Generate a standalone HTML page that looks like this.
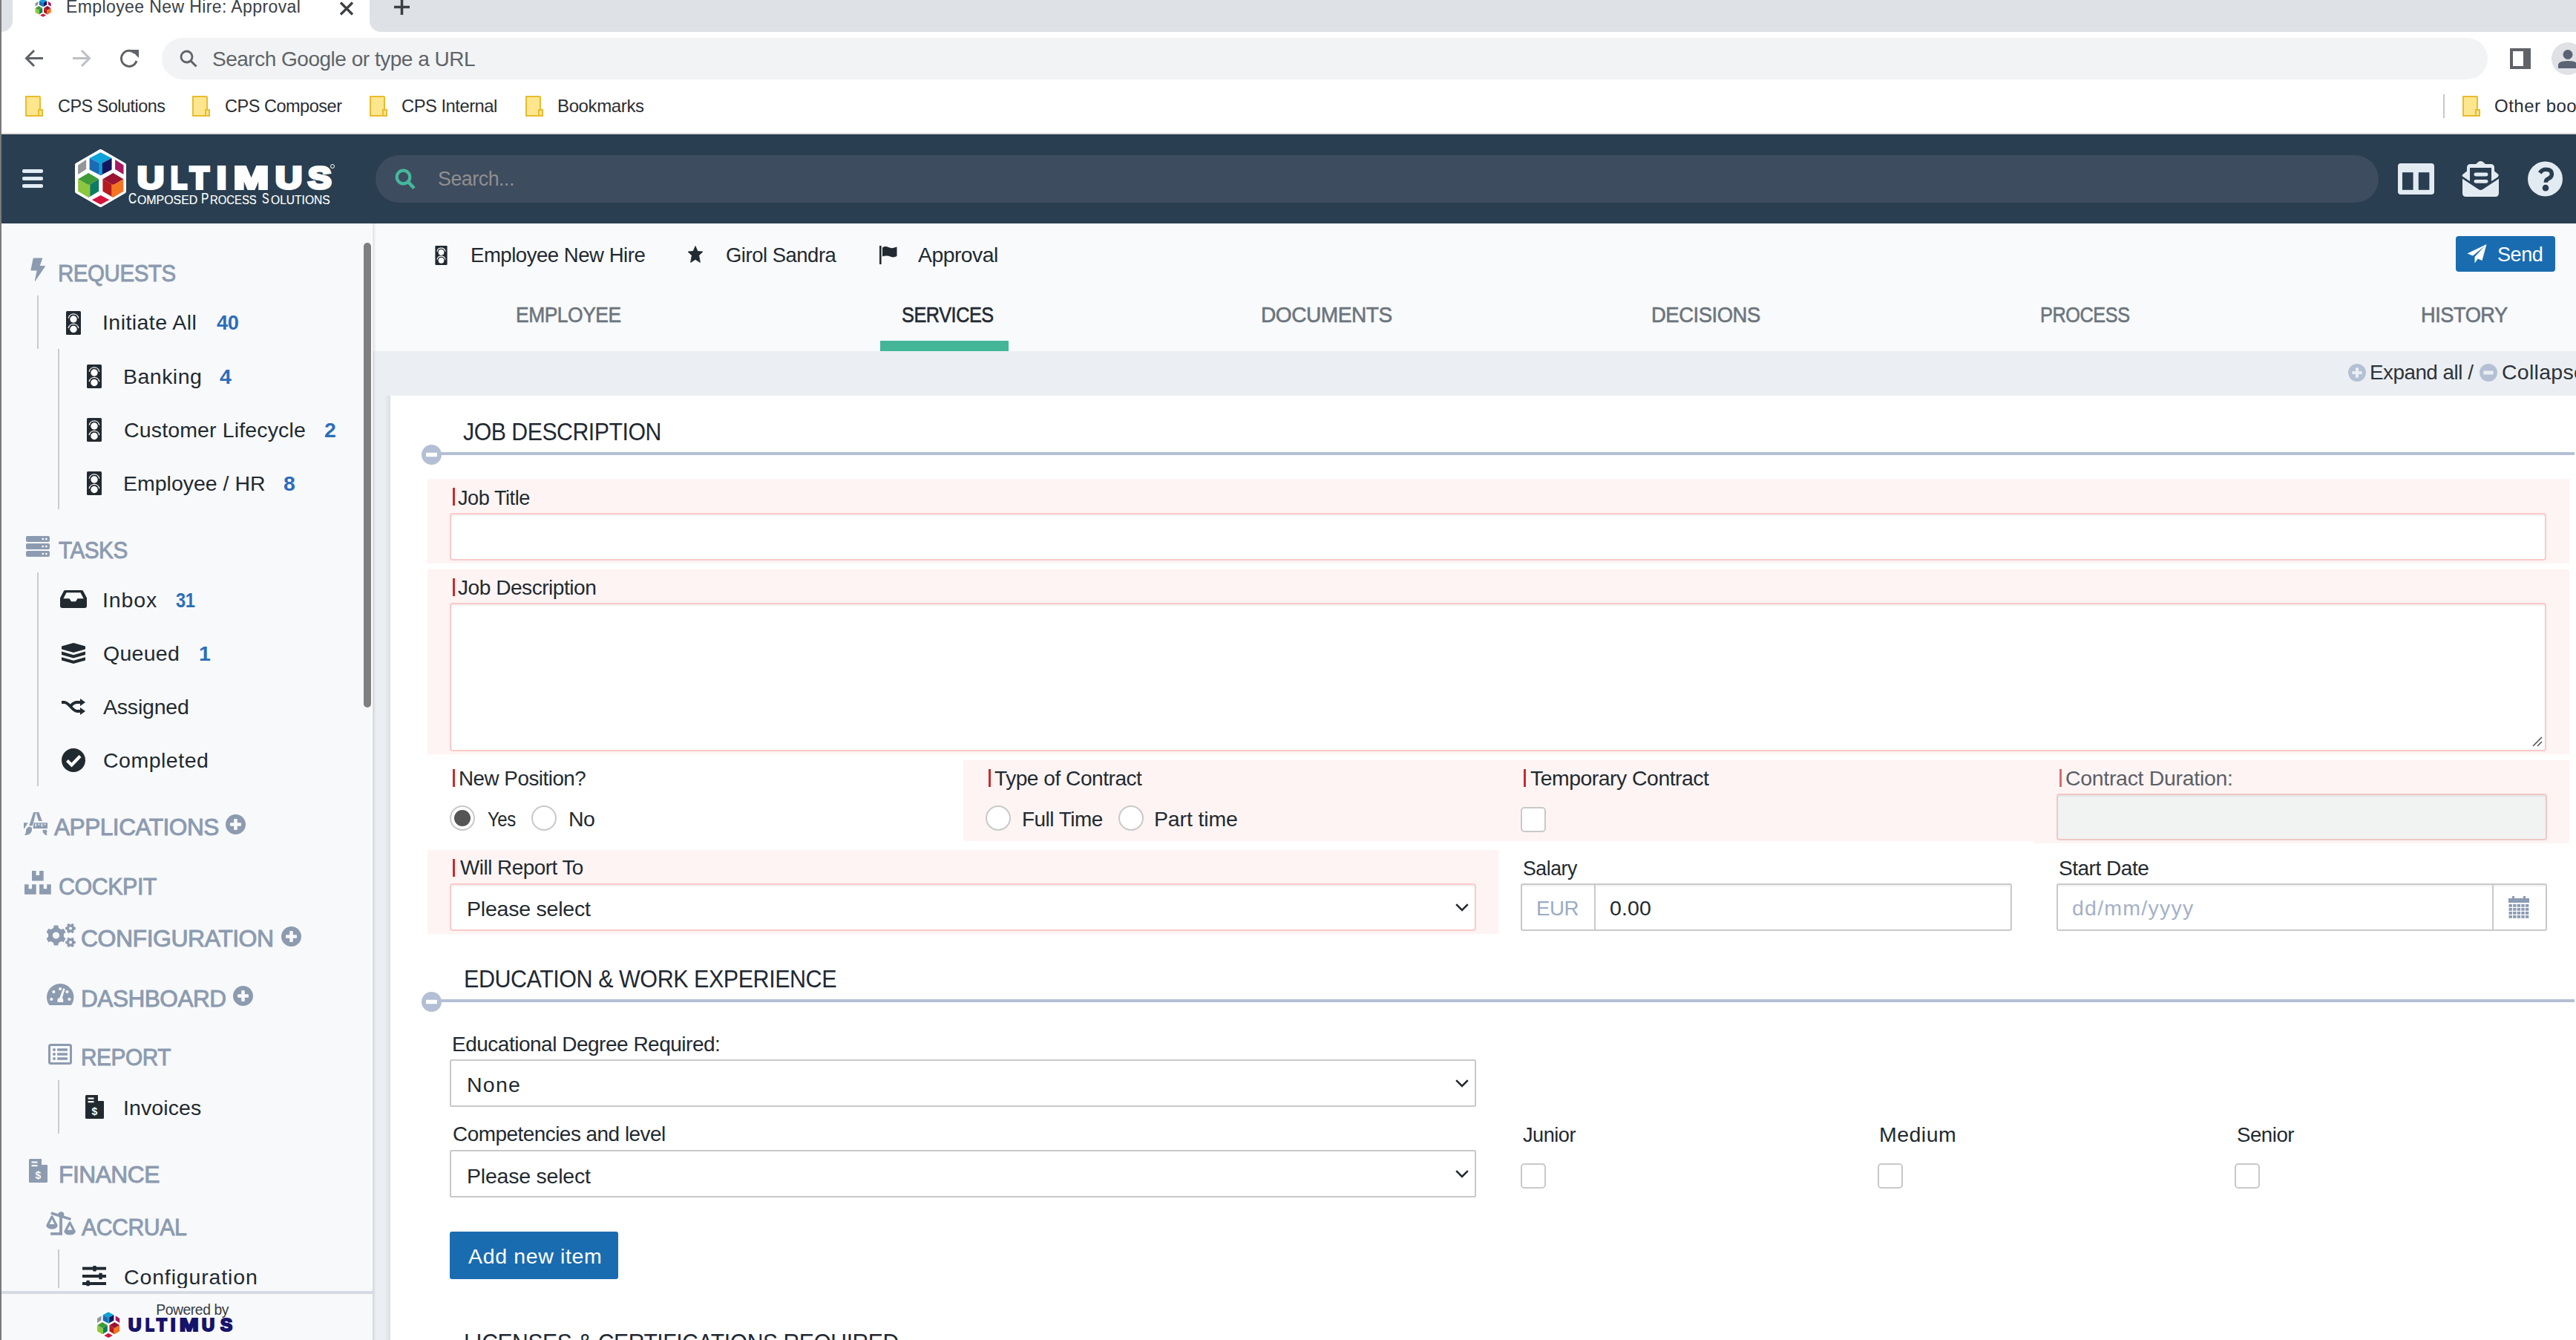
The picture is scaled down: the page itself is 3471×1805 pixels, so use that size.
<!DOCTYPE html>
<html><head><meta charset="utf-8"><title>Employee New Hire: Approval</title>
<style>
html,body{margin:0;padding:0;width:3471px;height:1805px;overflow:hidden;background:#fff;}
body{position:relative;font-family:"Liberation Sans", sans-serif;}
svg{display:block;overflow:visible}
</style></head><body>
<div style="position:absolute;left:0px;top:0px;width:3471px;height:180px;background:#ffffff;"></div>
<div style="position:absolute;left:0px;top:0px;width:3471px;height:43px;background:#dee1e6;"></div>
<div style="position:absolute;left:17px;top:0px;width:481px;height:43px;background:#ffffff;"></div>
<div style="position:absolute;left:2px;top:28px;width:520px;height:15px;background:#ffffff;"></div>
<div style="position:absolute;left:2px;top:0px;width:15px;height:43px;background:#dee1e6;border-bottom-right-radius:15px"></div>
<div style="position:absolute;left:498px;top:0px;width:2973px;height:43px;background:#dee1e6;border-bottom-left-radius:15px"></div>
<svg style="position:absolute;left:46px;top:-3px;width:24px;height:27px" viewBox="0 0 69 78"><polygon points="34.5,2.5 66.5,21 66.5,57 34.5,75.5 2.5,57 2.5,21" fill="#fff" stroke="#fff" stroke-width="5" stroke-linejoin="round"/><polygon points="34.60,4.20 49.60,11.95 34.60,19.70 19.60,11.95" fill="#0ea2d9"/><polygon points="19.60,11.95 34.60,19.70 34.60,35.20 19.60,27.45" fill="#1b6ab5"/><polygon points="49.60,11.95 49.60,27.45 34.60,35.20 34.60,19.70" fill="#15155e"/><polygon points="32.40,18.70 36.80,18.70 36.80,34.20 32.40,34.20" fill="#0ea2d9"/><polygon points="18.20,32.00 32.20,40.25 18.20,48.50 4.20,40.25" fill="#3f9a38"/><polygon points="4.20,40.25 18.20,48.50 18.20,65.00 4.20,56.75" fill="#8dc63f"/><polygon points="32.20,40.25 32.20,56.75 18.20,65.00 18.20,48.50" fill="#0b7d62"/><polygon points="16.00,47.50 20.40,47.50 20.40,64.00 16.00,64.00" fill="#8dc63f"/><polygon points="51.40,32.00 65.40,40.25 51.40,48.50 37.40,40.25" fill="#9c1530"/><polygon points="37.40,40.25 51.40,48.50 51.40,65.00 37.40,56.75" fill="#b51c1f"/><polygon points="65.40,40.25 65.40,56.75 51.40,65.00 51.40,48.50" fill="#f47521"/><polygon points="49.20,47.50 53.60,47.50 53.60,64.00 49.20,64.00" fill="#f47521"/><polygon points="4.1,21.5 15.2,14 15.2,27 4.1,34" fill="#939598"/><polygon points="54.1,14 65.5,21.5 65.5,34 54.1,27" fill="#a8175f"/><polygon points="34.6,62 46.4,68.2 34.6,74.4 22.9,68.2" fill="#d3143c"/></svg>
<div style="position:absolute;left:89.00px;top:-2.20px;font-size:23px;line-height:23px;color:#3c4043;font-weight:400;letter-spacing:0.397px;white-space:nowrap;">Employee New Hire: Approval</div>
<svg style="position:absolute;left:457px;top:3px;width:20px;height:17px" viewBox="0 0 20 17"><path d="M2 0.5 L18 16.5 M18 0.5 L2 16.5" stroke="#3c4043" stroke-width="3.2"/></svg>
<svg style="position:absolute;left:530px;top:-1px;width:23px;height:22px" viewBox="0 0 23 22"><path d="M11.5 0 V21 M1 10.5 H22" stroke="#3c4043" stroke-width="3.6"/></svg>
<div style="position:absolute;left:218px;top:51px;width:3134px;height:56px;background:#f1f3f4;border-radius:28px"></div>
<svg style="position:absolute;left:33px;top:66px;width:26px;height:25px" viewBox="0 0 26 25"><path d="M25 12.5 H3 M13 2 L2.5 12.5 L13 23" stroke="#5f6368" stroke-width="3" fill="none"/></svg>
<svg style="position:absolute;left:97px;top:66px;width:26px;height:25px" viewBox="0 0 26 25"><path d="M1 12.5 H23 M13 2 L23.5 12.5 L13 23" stroke="#bcc0c4" stroke-width="3" fill="none"/></svg>
<svg style="position:absolute;left:161px;top:66px;width:27px;height:26px" viewBox="0 0 27 26"><path d="M23 16 A10.5 10.5 0 1 1 20.5 5.5" stroke="#5f6368" stroke-width="3" fill="none"/><path d="M15 1 H26 V12Z" fill="#5f6368"/></svg>
<svg style="position:absolute;left:242px;top:67px;width:24px;height:24px" viewBox="0 0 24 24"><circle cx="9.5" cy="9.5" r="7.5" stroke="#5f6368" stroke-width="2.8" fill="none"/><path d="M15 15 L22.5 22.5" stroke="#5f6368" stroke-width="3"/></svg>
<div style="position:absolute;left:286.00px;top:65.62px;font-size:28px;line-height:28px;color:#5f6368;font-weight:400;letter-spacing:-0.490px;white-space:nowrap;">Search Google or type a URL</div>
<svg style="position:absolute;left:3382px;top:65px;width:28px;height:28px" viewBox="0 0 28 28"><rect x="0" y="0" width="28" height="28" fill="#5f6368"/><rect x="4" y="4" width="14" height="20" fill="#fff"/></svg>
<div style="position:absolute;left:3438px;top:57px;width:44px;height:44px;background:#dfe1e5;border-radius:22px"></div>
<svg style="position:absolute;left:3447px;top:67px;width:35px;height:25px" viewBox="0 0 35 25"><circle cx="13" cy="6.5" r="6.5" fill="#5a6274"/><path d="M0 25 V21 Q0 15 13 15 Q26 15 26 21 V25Z" fill="#5a6274"/></svg>
<svg style="position:absolute;left:34px;top:129px;width:24px;height:28px" viewBox="0 0 24 28"><path d="M1 1 H19 Q20 1 20 2 V19 H23 V27 H1Z" fill="#fde68e" stroke="#e8bc2f" stroke-width="2"/><path d="M18 19 H23 V27 H18Z" fill="#fde68e" stroke="#e8bc2f" stroke-width="2"/></svg>
<svg style="position:absolute;left:259px;top:129px;width:24px;height:28px" viewBox="0 0 24 28"><path d="M1 1 H19 Q20 1 20 2 V19 H23 V27 H1Z" fill="#fde68e" stroke="#e8bc2f" stroke-width="2"/><path d="M18 19 H23 V27 H18Z" fill="#fde68e" stroke="#e8bc2f" stroke-width="2"/></svg>
<svg style="position:absolute;left:498px;top:129px;width:24px;height:28px" viewBox="0 0 24 28"><path d="M1 1 H19 Q20 1 20 2 V19 H23 V27 H1Z" fill="#fde68e" stroke="#e8bc2f" stroke-width="2"/><path d="M18 19 H23 V27 H18Z" fill="#fde68e" stroke="#e8bc2f" stroke-width="2"/></svg>
<svg style="position:absolute;left:708px;top:129px;width:24px;height:28px" viewBox="0 0 24 28"><path d="M1 1 H19 Q20 1 20 2 V19 H23 V27 H1Z" fill="#fde68e" stroke="#e8bc2f" stroke-width="2"/><path d="M18 19 H23 V27 H18Z" fill="#fde68e" stroke="#e8bc2f" stroke-width="2"/></svg>
<svg style="position:absolute;left:3318px;top:129px;width:24px;height:28px" viewBox="0 0 24 28"><path d="M1 1 H19 Q20 1 20 2 V19 H23 V27 H1Z" fill="#fde68e" stroke="#e8bc2f" stroke-width="2"/><path d="M18 19 H23 V27 H18Z" fill="#fde68e" stroke="#e8bc2f" stroke-width="2"/></svg>
<div style="position:absolute;left:78.03px;top:130.96px;font-size:24px;line-height:24px;color:#2b2e33;font-weight:400;letter-spacing:-0.500px;white-space:nowrap;transform:scaleX(0.9746);transform-origin:0 0;">CPS Solutions</div>
<div style="position:absolute;left:303.02px;top:130.96px;font-size:24px;line-height:24px;color:#2b2e33;font-weight:400;letter-spacing:-0.500px;white-space:nowrap;transform:scaleX(0.9798);transform-origin:0 0;">CPS Composer</div>
<div style="position:absolute;left:541.01px;top:130.96px;font-size:24px;line-height:24px;color:#2b2e33;font-weight:400;letter-spacing:-0.500px;white-space:nowrap;transform:scaleX(0.9904);transform-origin:0 0;">CPS Internal</div>
<div style="position:absolute;left:751.00px;top:130.96px;font-size:24px;line-height:24px;color:#2b2e33;font-weight:400;letter-spacing:-0.379px;white-space:nowrap;">Bookmarks</div>
<div style="position:absolute;left:3292px;top:127px;width:2px;height:32px;background:#c7c7c7;"></div>
<div style="position:absolute;left:3361.00px;top:130.96px;font-size:24px;line-height:24px;color:#2b2e33;font-weight:400;letter-spacing:0.495px;white-space:nowrap;">Other bookmarks</div>
<div style="position:absolute;left:0px;top:179px;width:3471px;height:2px;background:#dcdcdc;"></div>
<div style="position:absolute;left:0px;top:181px;width:3471px;height:120px;background:#293e50;"></div>
<div style="position:absolute;left:0px;top:181px;width:3471px;height:1px;background:#22364a;"></div>
<div style="position:absolute;left:30px;top:228px;width:28px;height:5px;background:#e3ecf3;border-radius:2px"></div>
<div style="position:absolute;left:30px;top:238px;width:28px;height:5px;background:#e3ecf3;border-radius:2px"></div>
<div style="position:absolute;left:30px;top:248px;width:28px;height:5px;background:#e3ecf3;border-radius:2px"></div>
<svg style="position:absolute;left:101px;top:201px;width:69px;height:78px" viewBox="0 0 69 78"><polygon points="34.5,2.5 66.5,21 66.5,57 34.5,75.5 2.5,57 2.5,21" fill="#fff" stroke="#fff" stroke-width="5" stroke-linejoin="round"/><polygon points="34.60,4.20 49.60,11.95 34.60,19.70 19.60,11.95" fill="#0ea2d9"/><polygon points="19.60,11.95 34.60,19.70 34.60,35.20 19.60,27.45" fill="#1b6ab5"/><polygon points="49.60,11.95 49.60,27.45 34.60,35.20 34.60,19.70" fill="#15155e"/><polygon points="32.40,18.70 36.80,18.70 36.80,34.20 32.40,34.20" fill="#0ea2d9"/><polygon points="18.20,32.00 32.20,40.25 18.20,48.50 4.20,40.25" fill="#3f9a38"/><polygon points="4.20,40.25 18.20,48.50 18.20,65.00 4.20,56.75" fill="#8dc63f"/><polygon points="32.20,40.25 32.20,56.75 18.20,65.00 18.20,48.50" fill="#0b7d62"/><polygon points="16.00,47.50 20.40,47.50 20.40,64.00 16.00,64.00" fill="#8dc63f"/><polygon points="51.40,32.00 65.40,40.25 51.40,48.50 37.40,40.25" fill="#9c1530"/><polygon points="37.40,40.25 51.40,48.50 51.40,65.00 37.40,56.75" fill="#b51c1f"/><polygon points="65.40,40.25 65.40,56.75 51.40,65.00 51.40,48.50" fill="#f47521"/><polygon points="49.20,47.50 53.60,47.50 53.60,64.00 49.20,64.00" fill="#f47521"/><polygon points="4.1,21.5 15.2,14 15.2,27 4.1,34" fill="#939598"/><polygon points="54.1,14 65.5,21.5 65.5,34 54.1,27" fill="#a8175f"/><polygon points="34.6,62 46.4,68.2 34.6,74.4 22.9,68.2" fill="#d3143c"/></svg>
<div style="position:absolute;left:184.82px;top:218.53px;font-size:42px;line-height:42px;color:#ffffff;font-weight:700;letter-spacing:0.000px;white-space:nowrap;-webkit-text-stroke:4px #ffffff;transform:scaleX(1.1885);transform-origin:0 0;">U</div>
<div style="position:absolute;left:230.49px;top:218.53px;font-size:42px;line-height:42px;color:#ffffff;font-weight:700;letter-spacing:0.000px;white-space:nowrap;-webkit-text-stroke:4px #ffffff;transform:scaleX(0.8565);transform-origin:0 0;">L</div>
<div style="position:absolute;left:256.40px;top:218.53px;font-size:42px;line-height:42px;color:#ffffff;font-weight:700;letter-spacing:0.000px;white-space:nowrap;-webkit-text-stroke:4px #ffffff;transform:scaleX(0.9962);transform-origin:0 0;">T</div>
<div style="position:absolute;left:292.47px;top:218.53px;font-size:42px;line-height:42px;color:#ffffff;font-weight:700;letter-spacing:0.000px;white-space:nowrap;-webkit-text-stroke:4px #ffffff;transform:scaleX(1.1143);transform-origin:0 0;">I</div>
<div style="position:absolute;left:314.52px;top:218.53px;font-size:42px;line-height:42px;color:#ffffff;font-weight:700;letter-spacing:0.000px;white-space:nowrap;-webkit-text-stroke:4px #ffffff;transform:scaleX(1.3419);transform-origin:0 0;">M</div>
<div style="position:absolute;left:370.52px;top:218.53px;font-size:42px;line-height:42px;color:#ffffff;font-weight:700;letter-spacing:0.000px;white-space:nowrap;-webkit-text-stroke:4px #ffffff;transform:scaleX(1.1885);transform-origin:0 0;">U</div>
<div style="position:absolute;left:415.18px;top:218.53px;font-size:42px;line-height:42px;color:#ffffff;font-weight:700;letter-spacing:0.000px;white-space:nowrap;-webkit-text-stroke:4px #ffffff;transform:scaleX(1.1231);transform-origin:0 0;">S</div>
<div style="position:absolute;left:445px;top:221px;width:6px;height:6px;border-radius:3px;border:1px solid #fff;box-sizing:border-box;"></div>
<div style="position:absolute;left:173.42px;top:258.33px;font-size:19.6px;line-height:19.6px;color:#ffffff;font-weight:400;letter-spacing:0.000px;white-space:nowrap;-webkit-text-stroke:0.15px #ffffff;transform:scaleX(0.7769);transform-origin:0 0;">C</div>
<div style="position:absolute;left:184.60px;top:261.09px;font-size:16.3px;line-height:16.3px;color:#ffffff;font-weight:400;letter-spacing:0.000px;white-space:nowrap;-webkit-text-stroke:0.15px #ffffff;transform:scaleX(0.9761);transform-origin:0 0;">OMPOSED</div>
<div style="position:absolute;left:271.41px;top:258.33px;font-size:19.6px;line-height:19.6px;color:#ffffff;font-weight:400;letter-spacing:0.000px;white-space:nowrap;-webkit-text-stroke:0.15px #ffffff;transform:scaleX(0.7917);transform-origin:0 0;">P</div>
<div style="position:absolute;left:283.39px;top:261.09px;font-size:16.3px;line-height:16.3px;color:#ffffff;font-weight:400;letter-spacing:0.000px;white-space:nowrap;-webkit-text-stroke:0.15px #ffffff;transform:scaleX(0.9117);transform-origin:0 0;">ROCESS</div>
<div style="position:absolute;left:352.70px;top:258.33px;font-size:19.6px;line-height:19.6px;color:#ffffff;font-weight:400;letter-spacing:0.000px;white-space:nowrap;-webkit-text-stroke:0.15px #ffffff;transform:scaleX(0.7308);transform-origin:0 0;">S</div>
<div style="position:absolute;left:365.30px;top:261.09px;font-size:16.3px;line-height:16.3px;color:#ffffff;font-weight:400;letter-spacing:0.000px;white-space:nowrap;-webkit-text-stroke:0.15px #ffffff;transform:scaleX(0.9584);transform-origin:0 0;">OLUTIONS</div>
<div style="position:absolute;left:506px;top:209px;width:2699px;height:64px;background:#3e4c5f;border-radius:32px"></div>
<svg style="position:absolute;left:532px;top:227px;width:28px;height:29px" viewBox="0 0 28 29"><circle cx="11.5" cy="11.5" r="8.8" stroke="#45b89c" stroke-width="4.2" fill="none"/><path d="M18 18 L26 26.5" stroke="#45b89c" stroke-width="4.6"/></svg>
<div style="position:absolute;left:590.01px;top:228.46px;font-size:27px;line-height:27px;color:#8f8f8f;font-weight:400;letter-spacing:-0.500px;white-space:nowrap;transform:scaleX(0.9946);transform-origin:0 0;">Search...</div>
<svg style="position:absolute;left:3231px;top:220px;width:49px;height:42px" viewBox="0 0 49 42"><rect x="0" y="0" width="49" height="42" rx="4" fill="#e3ebf2"/><rect x="6" y="12.2" width="14.6" height="23.6" fill="#293e50"/><rect x="27.8" y="12.2" width="14.6" height="23.6" fill="#293e50"/></svg>
<svg style="position:absolute;left:3318px;top:217px;width:49px;height:48px" viewBox="0 0 49 48"><path d="M24.5 0 Q26 0 27.5 1 L31 4 H38 Q43 4 43 9 V13.5 L48 17.5 Q49.5 19 48 20.5 V43 Q49 48 44 48 H5 Q0 48 0 43 V20.5 Q-1 19 1 17.5 L6 13.5 V9 Q6 4 11 4 H18 L21.5 1 Q23 0 24.5 0Z" fill="#e3ebf2"/><rect x="10" y="9" width="29" height="30" fill="#293e50"/><path d="M0 20.5 L22 35.3 Q24.5 37 27 35.3 L49 20.5 V43 Q49 48 44 48 H5 Q0 48 0 43Z" fill="#293e50"/><path d="M0 23.8 L22 38.2 Q24.5 39.8 27 38.2 L49 23.8 V43 Q49 48 44 48 H5 Q0 48 0 43Z" fill="#e3ebf2"/><rect x="15.5" y="15.6" width="19" height="4.8" rx="2.4" fill="#e3ebf2"/><rect x="15.5" y="24.9" width="19" height="4.8" rx="2.4" fill="#e3ebf2"/></svg>
<svg style="position:absolute;left:3406px;top:217px;width:47px;height:48px" viewBox="0 0 47 48"><circle cx="23.5" cy="24" r="23.5" fill="#e3ebf2"/><path d="M16.2 15.8 Q19.5 11.3 24.2 11.3 Q32.4 11.3 32.4 17.2 Q32.4 21.5 27.5 23.8 Q24.3 25.3 24.3 28.8" stroke="#293e50" stroke-width="5.6" fill="none"/><circle cx="24" cy="36.1" r="4.3" fill="#293e50"/></svg>
<div style="position:absolute;left:0px;top:301px;width:502px;height:1504px;background:#f8f9fb;"></div>
<div style="position:absolute;left:500px;top:301px;width:2px;height:1504px;background:#ffffff;"></div>
<div style="position:absolute;left:490px;top:327px;width:10px;height:626px;background:#7f7f7f;border-radius:5px"></div>
<div style="position:absolute;left:50px;top:398px;width:2px;height:72px;background:#cccccc;"></div>
<div style="position:absolute;left:78px;top:470px;width:2px;height:216px;background:#cccccc;"></div>
<div style="position:absolute;left:50px;top:771px;width:2px;height:288px;background:#cccccc;"></div>
<div style="position:absolute;left:78px;top:1455px;width:2px;height:72px;background:#cccccc;"></div>
<div style="position:absolute;left:78px;top:1683px;width:2px;height:52px;background:#cccccc;"></div>
<svg style="position:absolute;left:41px;top:347px;width:20px;height:32px" viewBox="0 0 20 32"><path d="M4.5 0.5 H15.5 Q16.5 0.5 16 1.8 L12.8 11 H19 Q20.3 11 19.6 12.2 L6.6 31.5 Q5.8 32.3 5.9 31 L8.6 17.5 H1.3 Q0.2 17.5 0.5 16.3 L3.6 1.5 Q3.9 0.5 4.5 0.5Z" fill="#8c9bb0"/></svg>
<div style="position:absolute;left:78.16px;top:352.28px;font-size:32px;line-height:32px;color:#8c9bb0;font-weight:400;letter-spacing:-0.500px;white-space:nowrap;-webkit-text-stroke:0.95px #8c9bb0;transform:scaleX(0.9221);transform-origin:0 0;">REQUESTS</div>
<svg style="position:absolute;left:89px;top:419px;width:20px;height:32px" viewBox="0 0 20 32"><rect x="0" y="0" width="20" height="32" rx="1.6" fill="#222a31"/><circle cx="10" cy="11" r="4.7" fill="#fff"/><circle cx="10" cy="24.5" r="4.7" fill="#fff"/><path d="M3.2 9.6 A6.9 6.9 0 0 1 16.8 9.6" stroke="#fff" stroke-width="1.3" fill="none"/><path d="M3.2 23.1 A6.9 6.9 0 0 1 16.8 23.1" stroke="#fff" stroke-width="1.3" fill="none"/></svg>
<div style="position:absolute;left:138.00px;top:420.20px;font-size:28.5px;line-height:28.5px;color:#222a31;font-weight:400;letter-spacing:0.434px;white-space:nowrap;">Initiate All</div>
<div style="position:absolute;left:292.00px;top:420.20px;font-size:28.5px;line-height:28.5px;color:#2c6db9;font-weight:700;letter-spacing:-0.500px;white-space:nowrap;transform:scaleX(0.9555);transform-origin:0 0;">40</div>
<svg style="position:absolute;left:117px;top:491px;width:20px;height:32px" viewBox="0 0 20 32"><rect x="0" y="0" width="20" height="32" rx="1.6" fill="#222a31"/><circle cx="10" cy="11" r="4.7" fill="#fff"/><circle cx="10" cy="24.5" r="4.7" fill="#fff"/><path d="M3.2 9.6 A6.9 6.9 0 0 1 16.8 9.6" stroke="#fff" stroke-width="1.3" fill="none"/><path d="M3.2 23.1 A6.9 6.9 0 0 1 16.8 23.1" stroke="#fff" stroke-width="1.3" fill="none"/></svg>
<div style="position:absolute;left:166.00px;top:493.20px;font-size:28.5px;line-height:28.5px;color:#222a31;font-weight:400;letter-spacing:0.476px;white-space:nowrap;">Banking</div>
<div style="position:absolute;left:296.00px;top:493.20px;font-size:28.5px;line-height:28.5px;color:#2c6db9;font-weight:700;letter-spacing:0.000px;white-space:nowrap;">4</div>
<svg style="position:absolute;left:117px;top:563px;width:20px;height:32px" viewBox="0 0 20 32"><rect x="0" y="0" width="20" height="32" rx="1.6" fill="#222a31"/><circle cx="10" cy="11" r="4.7" fill="#fff"/><circle cx="10" cy="24.5" r="4.7" fill="#fff"/><path d="M3.2 9.6 A6.9 6.9 0 0 1 16.8 9.6" stroke="#fff" stroke-width="1.3" fill="none"/><path d="M3.2 23.1 A6.9 6.9 0 0 1 16.8 23.1" stroke="#fff" stroke-width="1.3" fill="none"/></svg>
<div style="position:absolute;left:167.00px;top:565.20px;font-size:28.5px;line-height:28.5px;color:#222a31;font-weight:400;letter-spacing:0.148px;white-space:nowrap;">Customer Lifecycle</div>
<div style="position:absolute;left:437.00px;top:565.20px;font-size:28.5px;line-height:28.5px;color:#2c6db9;font-weight:700;letter-spacing:0.000px;white-space:nowrap;">2</div>
<svg style="position:absolute;left:117px;top:635px;width:20px;height:32px" viewBox="0 0 20 32"><rect x="0" y="0" width="20" height="32" rx="1.6" fill="#222a31"/><circle cx="10" cy="11" r="4.7" fill="#fff"/><circle cx="10" cy="24.5" r="4.7" fill="#fff"/><path d="M3.2 9.6 A6.9 6.9 0 0 1 16.8 9.6" stroke="#fff" stroke-width="1.3" fill="none"/><path d="M3.2 23.1 A6.9 6.9 0 0 1 16.8 23.1" stroke="#fff" stroke-width="1.3" fill="none"/></svg>
<div style="position:absolute;left:166.00px;top:637.20px;font-size:28.5px;line-height:28.5px;color:#222a31;font-weight:400;letter-spacing:-0.006px;white-space:nowrap;">Employee / HR</div>
<div style="position:absolute;left:382.00px;top:637.20px;font-size:28.5px;line-height:28.5px;color:#2c6db9;font-weight:700;letter-spacing:0.000px;white-space:nowrap;">8</div>
<svg style="position:absolute;left:35px;top:722px;width:32px;height:28px" viewBox="0 0 32 28"><rect x="0" y="0" width="32" height="8" rx="2" fill="#8c9bb0"/><rect x="21.5" y="2.8" width="2.6" height="2.4" rx="1" fill="#f8f9fb"/><rect x="26" y="2.8" width="2.6" height="2.4" rx="1" fill="#f8f9fb"/><rect x="0" y="10" width="32" height="8" rx="2" fill="#8c9bb0"/><rect x="21.5" y="12.8" width="2.6" height="2.4" rx="1" fill="#f8f9fb"/><rect x="26" y="12.8" width="2.6" height="2.4" rx="1" fill="#f8f9fb"/><rect x="0" y="20" width="32" height="8" rx="2" fill="#8c9bb0"/><rect x="21.5" y="22.8" width="2.6" height="2.4" rx="1" fill="#f8f9fb"/><rect x="26" y="22.8" width="2.6" height="2.4" rx="1" fill="#f8f9fb"/></svg>
<div style="position:absolute;left:79.00px;top:725.28px;font-size:32px;line-height:32px;color:#8c9bb0;font-weight:400;letter-spacing:-0.500px;white-space:nowrap;-webkit-text-stroke:0.95px #8c9bb0;transform:scaleX(0.9274);transform-origin:0 0;">TASKS</div>
<svg style="position:absolute;left:81px;top:795px;width:36px;height:24px" viewBox="0 0 36 24"><path fill-rule="evenodd" fill="#222a31" d="M7 0 H29 Q30.5 0 31.3 1.4 L36 10.5 V21 Q36 24 33 24 H3 Q0 24 0 21 V10.5 L4.7 1.4 Q5.5 0 7 0Z M8.5 3.3 H27.5 L31.6 11.2 H23.5 L21 15.2 H15 L12.5 11.2 H4.4Z"/></svg>
<div style="position:absolute;left:138.00px;top:794.20px;font-size:28.5px;line-height:28.5px;color:#222a31;font-weight:400;letter-spacing:0.883px;white-space:nowrap;">Inbox</div>
<div style="position:absolute;left:237.00px;top:794.20px;font-size:28.5px;line-height:28.5px;color:#2c6db9;font-weight:700;letter-spacing:-0.500px;white-space:nowrap;transform:scaleX(0.8293);transform-origin:0 0;">31</div>
<svg style="position:absolute;left:83px;top:866px;width:32px;height:28px" viewBox="0 0 32 28"><path fill="#222a31" d="M16 0 L32 4.6 V8.4 L16 13 L0 8.4 V4.6Z"/><path fill="#222a31" d="M0 11.5 L16 16.2 L32 11.5 V16 L16 20.6 L0 16Z"/><path fill="#222a31" d="M0 19.2 L16 23.8 L32 19.2 V23.4 L16 28 L0 23.4Z"/></svg>
<div style="position:absolute;left:139.00px;top:866.20px;font-size:28.5px;line-height:28.5px;color:#222a31;font-weight:400;letter-spacing:0.286px;white-space:nowrap;">Queued</div>
<div style="position:absolute;left:268.00px;top:866.20px;font-size:28.5px;line-height:28.5px;color:#2c6db9;font-weight:700;letter-spacing:0.000px;white-space:nowrap;">1</div>
<svg style="position:absolute;left:83px;top:941px;width:32px;height:22px" viewBox="0 0 32 22"><path d="M0 5 H3.5 C10.5 5 14 17 21 17 H26" stroke="#222a31" stroke-width="3.8" fill="none"/><path d="M12.5 9.8 C15 6.5 17.5 5 21 5 H26" stroke="#222a31" stroke-width="3.8" fill="none"/><path d="M25 0 L32 5 L25 10Z" fill="#222a31"/><path d="M25 12 L32 17 L25 22Z" fill="#222a31"/></svg>
<div style="position:absolute;left:139.00px;top:938.20px;font-size:28.5px;line-height:28.5px;color:#222a31;font-weight:400;letter-spacing:-0.199px;white-space:nowrap;">Assigned</div>
<svg style="position:absolute;left:83px;top:1008px;width:32px;height:32px" viewBox="0 0 32 32"><circle cx="16" cy="16" r="16" fill="#222a31"/><path d="M7.5 16.5 L13.5 22.5 L25 10.5" stroke="#fff" stroke-width="4.2" fill="none" stroke-linejoin="miter"/></svg>
<div style="position:absolute;left:139.00px;top:1010.20px;font-size:28.5px;line-height:28.5px;color:#222a31;font-weight:400;letter-spacing:0.503px;white-space:nowrap;">Completed</div>
<svg style="position:absolute;left:32px;top:1094px;width:32px;height:31px" viewBox="0 0 32 31"><path d="M13.2 0 H16.5 L11.9 18.3 H7.2Z" fill="#8c9bb0"/><path d="M16.3 0 H20.4 L24.8 12.1 H20.1Z" fill="#8c9bb0"/><path d="M13.6 14.3 H32 V21.9 H12.5Z" fill="#8c9bb0"/><rect x="15.3" y="15.4" width="1.9" height="4" fill="#f8f9fb" opacity="0.8"/><rect x="19.4" y="15.4" width="1.9" height="2.2" fill="#f8f9fb" opacity="0.8"/><rect x="23.4" y="15.4" width="1.9" height="4" fill="#f8f9fb" opacity="0.8"/><rect x="27.5" y="15.4" width="1.9" height="2.2" fill="#f8f9fb" opacity="0.8"/><path d="M0 14.3 H5.8 L0.8 21.9 H0Z" fill="#8c9bb0"/><path d="M7.5 19.6 Q11.2 19.6 11.1 23.2 Q10.8 28.5 5.2 30.6 Q2 31.4 0.9 30.6 Q3 29.3 2.9 26.3 Q2.8 21 7.5 19.6Z" fill="#8c9bb0"/><path d="M25.4 23.7 H30.6 L31.6 26.2 L30.5 28.3 L31.5 31 H29.3 L26 27.8Z" fill="#8c9bb0"/></svg>
<div style="position:absolute;left:73.00px;top:1098.28px;font-size:32px;line-height:32px;color:#8c9bb0;font-weight:400;letter-spacing:-0.500px;white-space:nowrap;-webkit-text-stroke:0.95px #8c9bb0;transform:scaleX(0.9878);transform-origin:0 0;">APPLICATIONS</div>
<svg style="position:absolute;left:304px;top:1097px;width:27px;height:27px" viewBox="0 0 27 27"><circle cx="13.5" cy="13.5" r="13.5" fill="#8c9bb0"/><rect x="6" y="11.2" width="15" height="4.6" rx="1" fill="#f8f9fb"/><rect x="11.2" y="6" width="4.6" height="15" rx="1" fill="#f8f9fb"/></svg>
<svg style="position:absolute;left:33px;top:1173px;width:36px;height:32px" viewBox="0 0 36 32"><path d="M10 0 H15.6 V6 H20.1 V0 H25.7 V13.6 H10Z" fill="#8c9bb0"/><path d="M0 18.2 H5.6 V24.2 H10.1 V18.2 H15.7 V31.799999999999997 H0Z" fill="#8c9bb0"/><path d="M20.1 18.2 H25.700000000000003 V24.2 H30.200000000000003 V18.2 H35.8 V31.799999999999997 H20.1Z" fill="#8c9bb0"/></svg>
<div style="position:absolute;left:79.05px;top:1178.28px;font-size:32px;line-height:32px;color:#8c9bb0;font-weight:400;letter-spacing:-0.500px;white-space:nowrap;-webkit-text-stroke:0.95px #8c9bb0;transform:scaleX(0.9514);transform-origin:0 0;">COCKPIT</div>
<svg style="position:absolute;left:62px;top:1244px;width:40px;height:32px" viewBox="0 0 40 32"><path fill-rule="evenodd" fill="#8c9bb0" d="M9.97 6.01 L10.78 2.57 L16.22 2.57 L17.03 6.01 L20.39 7.94 L23.77 6.93 L26.49 11.64 L23.92 14.06 L23.92 17.94 L26.49 20.36 L23.77 25.07 L20.39 24.06 L17.03 25.99 L16.22 29.43 L10.78 29.43 L9.97 25.99 L6.61 24.06 L3.23 25.07 L0.51 20.36 L3.08 17.94 L3.08 14.06 L0.51 11.64 L3.23 6.93 L6.61 7.94Z M18.10 16.00 A4.6 4.6 0 1 0 8.90 16.00 A4.6 4.6 0 1 0 18.10 16.00Z"/><path fill-rule="evenodd" fill="#8c9bb0" d="M33.88 1.17 L35.23 -0.14 L37.63 1.25 L37.17 3.07 L38.05 4.60 L39.86 5.11 L39.86 7.89 L38.05 8.40 L37.17 9.93 L37.63 11.75 L35.23 13.14 L33.88 11.83 L32.12 11.83 L30.77 13.14 L28.37 11.75 L28.83 9.93 L27.95 8.40 L26.14 7.89 L26.14 5.11 L27.95 4.60 L28.83 3.07 L28.37 1.25 L30.77 -0.14 L32.12 1.17Z M35.10 6.50 A2.1 2.1 0 1 0 30.90 6.50 A2.1 2.1 0 1 0 35.10 6.50Z"/><path fill-rule="evenodd" fill="#8c9bb0" d="M33.88 19.97 L35.23 18.66 L37.63 20.05 L37.17 21.87 L38.05 23.40 L39.86 23.91 L39.86 26.69 L38.05 27.20 L37.17 28.73 L37.63 30.55 L35.23 31.94 L33.88 30.63 L32.12 30.63 L30.77 31.94 L28.37 30.55 L28.83 28.73 L27.95 27.20 L26.14 26.69 L26.14 23.91 L27.95 23.40 L28.83 21.87 L28.37 20.05 L30.77 18.66 L32.12 19.97Z M35.10 25.30 A2.1 2.1 0 1 0 30.90 25.30 A2.1 2.1 0 1 0 35.10 25.30Z"/></svg>
<div style="position:absolute;left:109.00px;top:1248.28px;font-size:32px;line-height:32px;color:#8c9bb0;font-weight:400;letter-spacing:-0.496px;white-space:nowrap;-webkit-text-stroke:0.95px #8c9bb0;">CONFIGURATION</div>
<svg style="position:absolute;left:379px;top:1248px;width:27px;height:27px" viewBox="0 0 27 27"><circle cx="13.5" cy="13.5" r="13.5" fill="#8c9bb0"/><rect x="6" y="11.2" width="15" height="4.6" rx="1" fill="#f8f9fb"/><rect x="11.2" y="6" width="4.6" height="15" rx="1" fill="#f8f9fb"/></svg>
<svg style="position:absolute;left:63px;top:1326px;width:37px;height:28px" viewBox="0 0 37 28"><path d="M3.5 28 A18.2 18.2 0 1 1 32.9 28Z" fill="#8c9bb0"/><circle cx="6.3" cy="20" r="2.1" fill="#f8f9fb"/><circle cx="30.4" cy="20" r="2.1" fill="#f8f9fb"/><circle cx="9.3" cy="10" r="2.1" fill="#f8f9fb"/><circle cx="27.4" cy="10" r="2.1" fill="#f8f9fb"/><circle cx="18.1" cy="6" r="2.1" fill="#f8f9fb"/><path d="M22.2 5.2 L24.6 5.9 L20.8 18.5 H17.2Z" fill="#f8f9fb"/><path d="M14.4 24 V21 Q14.8 18 18 17.9 H20.8 Q22.2 19 22.2 21 V24Z" fill="#f8f9fb"/></svg>
<div style="position:absolute;left:109.03px;top:1329.28px;font-size:32px;line-height:32px;color:#8c9bb0;font-weight:400;letter-spacing:-0.500px;white-space:nowrap;-webkit-text-stroke:0.95px #8c9bb0;transform:scaleX(0.9867);transform-origin:0 0;">DASHBOARD</div>
<svg style="position:absolute;left:314px;top:1328px;width:27px;height:27px" viewBox="0 0 27 27"><circle cx="13.5" cy="13.5" r="13.5" fill="#8c9bb0"/><rect x="6" y="11.2" width="15" height="4.6" rx="1" fill="#f8f9fb"/><rect x="11.2" y="6" width="4.6" height="15" rx="1" fill="#f8f9fb"/></svg>
<svg style="position:absolute;left:65px;top:1406px;width:32px;height:28px" viewBox="0 0 32 28"><rect x="1.5" y="1.5" width="29" height="25" rx="2" stroke="#8c9bb0" stroke-width="3" fill="none"/><circle cx="8" cy="8" r="2" fill="#8c9bb0"/><circle cx="8" cy="14" r="2" fill="#8c9bb0"/><circle cx="8" cy="20" r="2" fill="#8c9bb0"/><rect x="12" y="6.3" width="14" height="3.4" rx="1" fill="#8c9bb0"/><rect x="12" y="12.3" width="14" height="3.4" rx="1" fill="#8c9bb0"/><rect x="12" y="18.3" width="14" height="3.4" rx="1" fill="#8c9bb0"/></svg>
<div style="position:absolute;left:109.14px;top:1408.28px;font-size:32px;line-height:32px;color:#8c9bb0;font-weight:400;letter-spacing:-0.500px;white-space:nowrap;-webkit-text-stroke:0.95px #8c9bb0;transform:scaleX(0.9317);transform-origin:0 0;">REPORT</div>
<svg style="position:absolute;left:115px;top:1475px;width:25px;height:32px" viewBox="0 0 25 32"><path d="M1.5 0 H16.5 L25 8.5 V30.5 Q25 32 23.5 32 H1.5 Q0 32 0 30.5 V1.5 Q0 0 1.5 0Z" fill="#222a31"/><path d="M17.5 0 V7.5 H25" fill="#f8f9fb"/><path d="M17 0 L25 8 L17 8Z" fill="#f8f9fb"/><path d="M18 0 L25 7 L18 7Z" fill="#222a31" opacity="0"/><rect x="3.5" y="3.5" width="8" height="2.2" fill="#f8f9fb"/><rect x="3.5" y="8" width="8" height="2.2" fill="#f8f9fb"/><text x="12.5" y="26.5" font-family="Liberation Sans" font-weight="700" font-size="14" text-anchor="middle" fill="#f8f9fb">$</text></svg>
<div style="position:absolute;left:166.00px;top:1478.20px;font-size:28.5px;line-height:28.5px;color:#222a31;font-weight:400;letter-spacing:0.100px;white-space:nowrap;">Invoices</div>
<svg style="position:absolute;left:39px;top:1561px;width:25px;height:32px" viewBox="0 0 25 32"><path d="M1.5 0 H16.5 L25 8.5 V30.5 Q25 32 23.5 32 H1.5 Q0 32 0 30.5 V1.5 Q0 0 1.5 0Z" fill="#8c9bb0"/><path d="M17.5 0 V7.5 H25" fill="#f8f9fb"/><path d="M17 0 L25 8 L17 8Z" fill="#f8f9fb"/><path d="M18 0 L25 7 L18 7Z" fill="#8c9bb0" opacity="0"/><rect x="3.5" y="3.5" width="8" height="2.2" fill="#f8f9fb"/><rect x="3.5" y="8" width="8" height="2.2" fill="#f8f9fb"/><text x="12.5" y="26.5" font-family="Liberation Sans" font-weight="700" font-size="14" text-anchor="middle" fill="#f8f9fb">$</text></svg>
<div style="position:absolute;left:79.02px;top:1566.28px;font-size:32px;line-height:32px;color:#8c9bb0;font-weight:400;letter-spacing:-0.500px;white-space:nowrap;-webkit-text-stroke:0.95px #8c9bb0;transform:scaleX(0.9917);transform-origin:0 0;">FINANCE</div>
<svg style="position:absolute;left:62px;top:1632px;width:40px;height:32px" viewBox="0 0 40 32"><rect x="18.1" y="4" width="3.8" height="27.6" fill="#8c9bb0"/><rect x="6.1" y="28.1" width="15.8" height="3.7" fill="#8c9bb0"/><circle cx="20.3" cy="4.3" r="4" fill="#8c9bb0"/><path d="M6.8 2 L33.4 10.4" stroke="#8c9bb0" stroke-width="3.6" fill="none"/><path d="M8 7 L2 18.5 H14Z" stroke="#8c9bb0" stroke-width="3.2" fill="none" stroke-linejoin="round"/><path d="M0.2 18.3 H15.7 Q15 23.7 8 23.7 Q1 23.7 0.2 18.3Z" fill="#8c9bb0"/><path d="M32.1 15 L26.1 26.4 H38.1Z" stroke="#8c9bb0" stroke-width="3.2" fill="none" stroke-linejoin="round"/><path d="M24.3 26.2 H39.8 Q39.1 31.6 32.1 31.6 Q25 31.6 24.3 26.2Z" fill="#8c9bb0"/></svg>
<div style="position:absolute;left:110.00px;top:1637.28px;font-size:32px;line-height:32px;color:#8c9bb0;font-weight:400;letter-spacing:-0.500px;white-space:nowrap;-webkit-text-stroke:0.95px #8c9bb0;transform:scaleX(0.9455);transform-origin:0 0;">ACCRUAL</div>
<svg style="position:absolute;left:111px;top:1705px;width:32px;height:27px" viewBox="0 0 32 27"><rect x="0" y="1.6" width="32" height="4" fill="#222a31"/><rect x="0" y="12" width="32" height="4" fill="#222a31"/><rect x="0" y="22" width="32" height="4" fill="#222a31"/><rect x="14.2" y="0" width="4.6" height="7.5" rx="1" fill="#222a31"/><rect x="22.2" y="9.8" width="4.6" height="8.4" rx="1" fill="#222a31"/><rect x="5.3" y="19.8" width="4.6" height="7.5" rx="1" fill="#222a31"/></svg>
<div style="position:absolute;left:167.00px;top:1706.20px;font-size:28.5px;line-height:28.5px;color:#222a31;font-weight:400;letter-spacing:0.860px;white-space:nowrap;">Configuration</div>
<div style="position:absolute;left:2px;top:1735px;width:500px;height:70px;background:#f8f9fb;"></div>
<div style="position:absolute;left:2px;top:1739px;width:500px;height:4px;background:#d5dae4;"></div>
<div style="position:absolute;left:210.30px;top:1754.88px;font-size:19.3px;line-height:19.3px;color:#353b41;font-weight:400;letter-spacing:-0.420px;white-space:nowrap;">Powered by</div>
<svg style="position:absolute;left:128.6px;top:1765.4px;width:34px;height:39px" viewBox="0 0 69 78"><polygon points="34.5,2.5 66.5,21 66.5,57 34.5,75.5 2.5,57 2.5,21" fill="#fff" stroke="#fff" stroke-width="5" stroke-linejoin="round"/><polygon points="34.60,4.20 49.60,11.95 34.60,19.70 19.60,11.95" fill="#0ea2d9"/><polygon points="19.60,11.95 34.60,19.70 34.60,35.20 19.60,27.45" fill="#1b6ab5"/><polygon points="49.60,11.95 49.60,27.45 34.60,35.20 34.60,19.70" fill="#15155e"/><polygon points="32.40,18.70 36.80,18.70 36.80,34.20 32.40,34.20" fill="#0ea2d9"/><polygon points="18.20,32.00 32.20,40.25 18.20,48.50 4.20,40.25" fill="#3f9a38"/><polygon points="4.20,40.25 18.20,48.50 18.20,65.00 4.20,56.75" fill="#8dc63f"/><polygon points="32.20,40.25 32.20,56.75 18.20,65.00 18.20,48.50" fill="#0b7d62"/><polygon points="16.00,47.50 20.40,47.50 20.40,64.00 16.00,64.00" fill="#8dc63f"/><polygon points="51.40,32.00 65.40,40.25 51.40,48.50 37.40,40.25" fill="#9c1530"/><polygon points="37.40,40.25 51.40,48.50 51.40,65.00 37.40,56.75" fill="#b51c1f"/><polygon points="65.40,40.25 65.40,56.75 51.40,65.00 51.40,48.50" fill="#f47521"/><polygon points="49.20,47.50 53.60,47.50 53.60,64.00 49.20,64.00" fill="#f47521"/><polygon points="4.1,21.5 15.2,14 15.2,27 4.1,34" fill="#939598"/><polygon points="54.1,14 65.5,21.5 65.5,34 54.1,27" fill="#a8175f"/><polygon points="34.6,62 46.4,68.2 34.6,74.4 22.9,68.2" fill="#d3143c"/></svg>
<div style="position:absolute;left:172.65px;top:1773.60px;font-size:23px;line-height:23px;color:#16136a;font-weight:700;letter-spacing:0.000px;white-space:nowrap;-webkit-text-stroke:2.2px #16136a;transform:scaleX(1.0467);transform-origin:0 0;">U</div>
<div style="position:absolute;left:196.46px;top:1773.60px;font-size:23px;line-height:23px;color:#16136a;font-weight:700;letter-spacing:0.000px;white-space:nowrap;-webkit-text-stroke:2.2px #16136a;transform:scaleX(0.8385);transform-origin:0 0;">L</div>
<div style="position:absolute;left:210.80px;top:1773.60px;font-size:23px;line-height:23px;color:#16136a;font-weight:700;letter-spacing:0.000px;white-space:nowrap;-webkit-text-stroke:2.2px #16136a;transform:scaleX(0.9786);transform-origin:0 0;">T</div>
<div style="position:absolute;left:230.10px;top:1773.60px;font-size:23px;line-height:23px;color:#16136a;font-weight:700;letter-spacing:0.000px;white-space:nowrap;-webkit-text-stroke:2.2px #16136a;">I</div>
<div style="position:absolute;left:242.07px;top:1773.60px;font-size:23px;line-height:23px;color:#16136a;font-weight:700;letter-spacing:0.000px;white-space:nowrap;-webkit-text-stroke:2.2px #16136a;transform:scaleX(1.3294);transform-origin:0 0;">M</div>
<div style="position:absolute;left:272.07px;top:1773.60px;font-size:23px;line-height:23px;color:#16136a;font-weight:700;letter-spacing:0.000px;white-space:nowrap;-webkit-text-stroke:2.2px #16136a;transform:scaleX(1.0267);transform-origin:0 0;">U</div>
<div style="position:absolute;left:297.20px;top:1773.60px;font-size:23px;line-height:23px;color:#16136a;font-weight:700;letter-spacing:0.000px;white-space:nowrap;-webkit-text-stroke:2.2px #16136a;transform:scaleX(1.0467);transform-origin:0 0;">S</div>
<div style="position:absolute;left:0px;top:0px;width:2px;height:1805px;background:#7a7a7a;"></div>
<div style="position:absolute;left:502px;top:301px;width:2969px;height:172px;background:#f9fafc;"></div>
<div style="position:absolute;left:502px;top:473px;width:2969px;height:1332px;background:#ebeff3;"></div>
<div style="position:absolute;left:526px;top:533px;width:2945px;height:1272px;background:#ffffff;"></div>
<div style="position:absolute;left:518px;top:533px;width:8px;height:1272px;background:linear-gradient(to right, rgba(0,0,0,0), rgba(0,0,0,0.07));"></div>
<div style="position:absolute;left:502px;top:301px;width:5px;height:1504px;background:linear-gradient(to right, rgba(0,0,0,0.10), rgba(0,0,0,0));"></div>
<svg style="position:absolute;left:586px;top:331px;width:17px;height:26px" viewBox="0 0 20 32"><rect x="0" y="0" width="20" height="32" rx="1.6" fill="#222a31"/><circle cx="10" cy="11" r="4.7" fill="#fff"/><circle cx="10" cy="24.5" r="4.7" fill="#fff"/><path d="M3.2 9.6 A6.9 6.9 0 0 1 16.8 9.6" stroke="#fff" stroke-width="1.3" fill="none"/><path d="M3.2 23.1 A6.9 6.9 0 0 1 16.8 23.1" stroke="#fff" stroke-width="1.3" fill="none"/></svg>
<div style="position:absolute;left:634.07px;top:329.20px;font-size:28.5px;line-height:28.5px;color:#222a31;font-weight:400;letter-spacing:-0.500px;white-space:nowrap;transform:scaleX(0.9669);transform-origin:0 0;">Employee New Hire</div>
<svg style="position:absolute;left:927px;top:331px;width:20px;height:23px" viewBox="0 0 20 23"><path d="M10 0.5 L13 7.4 L20 8.1 L14.7 13 L16.4 22.5 L10 18.4 L3.6 22.5 L5.3 13 L0 8.1 L7 7.4Z" fill="#222a31" stroke="#222a31" stroke-width="0.8" stroke-linejoin="round"/></svg>
<div style="position:absolute;left:978.04px;top:329.20px;font-size:28.5px;line-height:28.5px;color:#222a31;font-weight:400;letter-spacing:-0.500px;white-space:nowrap;transform:scaleX(0.9633);transform-origin:0 0;">Girol Sandra</div>
<svg style="position:absolute;left:1185px;top:331px;width:24px;height:25px" viewBox="0 0 24 25"><rect x="0" y="0" width="2.6" height="25" fill="#222a31"/><path d="M4 2.5 Q8 0 12 2 Q16 4 20 2.5 L23.5 1.5 V14 Q19 16.5 14.5 14.5 Q9.5 12.5 4 14.5Z" fill="#222a31"/></svg>
<div style="position:absolute;left:1237.00px;top:329.20px;font-size:28.5px;line-height:28.5px;color:#222a31;font-weight:400;letter-spacing:-0.500px;white-space:nowrap;transform:scaleX(0.9939);transform-origin:0 0;">Approval</div>
<div style="position:absolute;left:3309px;top:318px;width:134px;height:48px;background:#1a6cb0;border-radius:4px"></div>
<svg style="position:absolute;left:3324px;top:329px;width:27px;height:26px" viewBox="0 0 27 26"><path d="M26.5 0 L0.5 12.5 L8 15.5 L24 2.5 L10.5 17 V25.5 L14.8 19.5 L20.5 22 Z" fill="#fff"/></svg>
<div style="position:absolute;left:3365.05px;top:328.20px;font-size:28.5px;line-height:28.5px;color:#ffffff;font-weight:400;letter-spacing:-0.500px;white-space:nowrap;transform:scaleX(0.9492);transform-origin:0 0;">Send</div>
<div style="position:absolute;left:695.18px;top:409.79px;font-size:29px;line-height:29px;color:#6c757d;font-weight:400;letter-spacing:-0.500px;white-space:nowrap;-webkit-text-stroke:0.6px #6c757d;transform:scaleX(0.9108);transform-origin:0 0;">EMPLOYEE</div>
<div style="position:absolute;left:1215.13px;top:409.79px;font-size:29px;line-height:29px;color:#232b33;font-weight:400;letter-spacing:-0.500px;white-space:nowrap;-webkit-text-stroke:0.6px #232b33;transform:scaleX(0.8705);transform-origin:0 0;">SERVICES</div>
<div style="position:absolute;left:1699.06px;top:409.79px;font-size:29px;line-height:29px;color:#6c757d;font-weight:400;letter-spacing:-0.500px;white-space:nowrap;-webkit-text-stroke:0.6px #6c757d;transform:scaleX(0.9693);transform-origin:0 0;">DOCUMENTS</div>
<div style="position:absolute;left:2225.11px;top:409.79px;font-size:29px;line-height:29px;color:#6c757d;font-weight:400;letter-spacing:-0.500px;white-space:nowrap;-webkit-text-stroke:0.6px #6c757d;transform:scaleX(0.9466);transform-origin:0 0;">DECISIONS</div>
<div style="position:absolute;left:2749.26px;top:409.79px;font-size:29px;line-height:29px;color:#6c757d;font-weight:400;letter-spacing:-0.500px;white-space:nowrap;-webkit-text-stroke:0.6px #6c757d;transform:scaleX(0.8720);transform-origin:0 0;">PROCESS</div>
<div style="position:absolute;left:3262.12px;top:409.79px;font-size:29px;line-height:29px;color:#6c757d;font-weight:400;letter-spacing:-0.500px;white-space:nowrap;-webkit-text-stroke:0.6px #6c757d;transform:scaleX(0.9387);transform-origin:0 0;">HISTORY</div>
<div style="position:absolute;left:1186px;top:459px;width:173px;height:14px;background:#43b69a;"></div>
<svg style="position:absolute;left:3164px;top:490px;width:24px;height:24px" viewBox="0 0 27 27"><circle cx="13.5" cy="13.5" r="13.5" fill="#b4c0d4"/><rect x="6" y="11.2" width="15" height="4.6" rx="1" fill="#ebeff3"/><rect x="11.2" y="6" width="4.6" height="15" rx="1" fill="#ebeff3"/></svg>
<div style="position:absolute;left:3193.05px;top:487.20px;font-size:28.5px;line-height:28.5px;color:#2d3339;font-weight:400;letter-spacing:-0.500px;white-space:nowrap;transform:scaleX(0.9752);transform-origin:0 0;">Expand all /</div>
<svg style="position:absolute;left:3341px;top:490px;width:24px;height:24px" viewBox="0 0 27 27"><circle cx="13.5" cy="13.5" r="13.5" fill="#b4c0d4"/><rect x="6" y="10.8" width="15" height="5.4" rx="1" fill="#ebeff3"/></svg>
<div style="position:absolute;left:3371.00px;top:487.20px;font-size:28.5px;line-height:28.5px;color:#2d3339;font-weight:400;letter-spacing:0.273px;white-space:nowrap;">Collapse all</div>
<div style="position:absolute;left:624.00px;top:565.86px;font-size:32.5px;line-height:32.5px;color:#1f2933;font-weight:400;letter-spacing:-0.500px;white-space:nowrap;transform:scaleX(0.9302);transform-origin:0 0;">JOB DESCRIPTION</div>
<div style="position:absolute;left:590px;top:609px;width:2879px;height:4px;background:#b3bfd4;"></div>
<svg style="position:absolute;left:568px;top:599px;width:27px;height:27px" viewBox="0 0 27 27"><circle cx="13.5" cy="13.5" r="13.5" fill="#b3bfd4"/><rect x="6" y="10.8" width="15" height="5.4" rx="1" fill="#fff"/></svg>
<div style="position:absolute;left:576px;top:645px;width:2886px;height:114px;background:#fef4f4;"></div>
<div style="position:absolute;left:610px;top:657px;width:3px;height:24px;background:#cc2a2a;"></div>
<div style="position:absolute;left:617.00px;top:656.20px;font-size:28.5px;line-height:28.5px;color:#222a31;font-weight:400;letter-spacing:-0.500px;white-space:nowrap;transform:scaleX(0.9528);transform-origin:0 0;">Job Title</div>
<div style="position:absolute;left:606px;top:691px;width:2825px;height:64px;background:#fff;border:2px solid #fcc9c9;border-radius:4px;box-sizing:border-box;box-shadow:inset 0 2px 2px rgba(0,0,0,0.06);"></div>
<div style="position:absolute;left:576px;top:767px;width:2886px;height:249px;background:#fef4f4;"></div>
<div style="position:absolute;left:610px;top:779px;width:3px;height:24px;background:#cc2a2a;"></div>
<div style="position:absolute;left:617.00px;top:777.20px;font-size:28.5px;line-height:28.5px;color:#222a31;font-weight:400;letter-spacing:-0.500px;white-space:nowrap;transform:scaleX(0.9863);transform-origin:0 0;">Job Description</div>
<div style="position:absolute;left:606px;top:812px;width:2825px;height:200px;background:#fff;border:2px solid #fcc9c9;border-radius:4px;box-sizing:border-box;box-shadow:inset 0 2px 2px rgba(0,0,0,0.06);"></div>
<svg style="position:absolute;left:3412px;top:992px;width:14px;height:14px" viewBox="0 0 14 14"><path d="M13 1 L1 13 M13 7 L7 13" stroke="#555" stroke-width="1.6"/></svg>
<div style="position:absolute;left:610px;top:1036px;width:3px;height:24px;background:#cc2a2a;"></div>
<div style="position:absolute;left:618.05px;top:1034.20px;font-size:28.5px;line-height:28.5px;color:#222a31;font-weight:400;letter-spacing:-0.500px;white-space:nowrap;transform:scaleX(0.9751);transform-origin:0 0;">New Position?</div>
<div style="position:absolute;left:606px;top:1085px;width:34px;height:34px;background:#fff;border:2px solid #c9c9c9;border-radius:50%;box-sizing:border-box"></div>
<div style="position:absolute;left:612px;top:1091px;width:22px;height:22px;background:#555555;border-radius:50%"></div>
<div style="position:absolute;left:657.00px;top:1089.20px;font-size:28.5px;line-height:28.5px;color:#222a31;font-weight:400;letter-spacing:-0.500px;white-space:nowrap;transform:scaleX(0.8399);transform-origin:0 0;">Yes</div>
<div style="position:absolute;left:716px;top:1085px;width:34px;height:34px;background:#fff;border:2px solid #c9c9c9;border-radius:50%;box-sizing:border-box"></div>
<div style="position:absolute;left:766.00px;top:1089.20px;font-size:28.5px;line-height:28.5px;color:#222a31;font-weight:400;letter-spacing:-0.500px;white-space:nowrap;">No</div>
<div style="position:absolute;left:1298px;top:1024px;width:1443px;height:109px;background:#fef4f4;"></div>
<div style="position:absolute;left:2741px;top:1024px;width:721px;height:112px;background:#fef4f4;"></div>
<div style="position:absolute;left:1332px;top:1036px;width:3px;height:24px;background:#cc2a2a;"></div>
<div style="position:absolute;left:1340.00px;top:1034.20px;font-size:28.5px;line-height:28.5px;color:#222a31;font-weight:400;letter-spacing:-0.500px;white-space:nowrap;transform:scaleX(0.9867);transform-origin:0 0;">Type of Contract</div>
<div style="position:absolute;left:1328px;top:1085px;width:34px;height:34px;background:#fff;border:2px solid #c9c9c9;border-radius:50%;box-sizing:border-box"></div>
<div style="position:absolute;left:1377.04px;top:1089.20px;font-size:28.5px;line-height:28.5px;color:#222a31;font-weight:400;letter-spacing:-0.500px;white-space:nowrap;transform:scaleX(0.9793);transform-origin:0 0;">Full Time</div>
<div style="position:absolute;left:1507px;top:1085px;width:34px;height:34px;background:#fff;border:2px solid #c9c9c9;border-radius:50%;box-sizing:border-box"></div>
<div style="position:absolute;left:1555.00px;top:1089.20px;font-size:28.5px;line-height:28.5px;color:#222a31;font-weight:400;letter-spacing:-0.147px;white-space:nowrap;">Part time</div>
<div style="position:absolute;left:2053px;top:1036px;width:3px;height:24px;background:#cc2a2a;"></div>
<div style="position:absolute;left:2062.00px;top:1034.20px;font-size:28.5px;line-height:28.5px;color:#222a31;font-weight:400;letter-spacing:-0.500px;white-space:nowrap;transform:scaleX(0.9966);transform-origin:0 0;">Temporary Contract</div>
<div style="position:absolute;left:2049px;top:1087px;width:34px;height:34px;background:#fff;border:2px solid #c9c9c9;border-radius:5px;box-sizing:border-box"></div>
<div style="position:absolute;left:2775px;top:1036px;width:3px;height:24px;background:#dd6a6a;"></div>
<div style="position:absolute;left:2783.00px;top:1034.20px;font-size:28.5px;line-height:28.5px;color:#5b5f66;font-weight:400;letter-spacing:-0.315px;white-space:nowrap;">Contract Duration:</div>
<div style="position:absolute;left:2771px;top:1069px;width:661px;height:63px;background:#f1f2f2;border:2px solid #f2c7c7;border-radius:4px;box-sizing:border-box;box-shadow:inset 0 2px 2px rgba(0,0,0,0.06);"></div>
<div style="position:absolute;left:576px;top:1145px;width:1443px;height:113px;background:#fef4f4;"></div>
<div style="position:absolute;left:610px;top:1157px;width:3px;height:24px;background:#cc2a2a;"></div>
<div style="position:absolute;left:620.00px;top:1154.20px;font-size:28.5px;line-height:28.5px;color:#222a31;font-weight:400;letter-spacing:-0.500px;white-space:nowrap;transform:scaleX(0.9763);transform-origin:0 0;">Will Report To</div>
<div style="position:absolute;left:606px;top:1190px;width:1383px;height:64px;background:#fff;border:2px solid #fcc9c9;border-radius:4px;box-sizing:border-box;box-shadow:inset 0 2px 2px rgba(0,0,0,0.06);"></div>
<div style="position:absolute;left:629.00px;top:1210.20px;font-size:28.5px;line-height:28.5px;color:#222a31;font-weight:400;letter-spacing:-0.216px;white-space:nowrap;">Please select</div>
<svg style="position:absolute;left:1961px;top:1217px;width:18px;height:11px" viewBox="0 0 18 11"><path d="M1.2 1.2 L9 9 L16.8 1.2" stroke="#222a31" stroke-width="2.6" fill="none"/></svg>
<div style="position:absolute;left:2052.06px;top:1155.20px;font-size:28.5px;line-height:28.5px;color:#222a31;font-weight:400;letter-spacing:-0.500px;white-space:nowrap;transform:scaleX(0.9355);transform-origin:0 0;">Salary</div>
<div style="position:absolute;left:2049px;top:1190px;width:662px;height:64px;background:#fff;border:2px solid #c9c9c9;border-radius:4px;box-sizing:border-box;box-shadow:inset 0 2px 2px rgba(0,0,0,0.06);border-radius:3px"></div>
<div style="position:absolute;left:2148px;top:1192px;width:2px;height:60px;background:#c9c9c9;"></div>
<div style="position:absolute;left:2070.06px;top:1209.20px;font-size:28.5px;line-height:28.5px;color:#9aabc5;font-weight:400;letter-spacing:-0.500px;white-space:nowrap;transform:scaleX(0.9719);transform-origin:0 0;">EUR</div>
<div style="position:absolute;left:2169.00px;top:1209.20px;font-size:28.5px;line-height:28.5px;color:#222a31;font-weight:400;letter-spacing:0.127px;white-space:nowrap;">0.00</div>
<div style="position:absolute;left:2774.02px;top:1155.20px;font-size:28.5px;line-height:28.5px;color:#222a31;font-weight:400;letter-spacing:-0.500px;white-space:nowrap;transform:scaleX(0.9840);transform-origin:0 0;">Start Date</div>
<div style="position:absolute;left:2771px;top:1190px;width:661px;height:64px;background:#fff;border:2px solid #c9c9c9;border-radius:4px;box-sizing:border-box;box-shadow:inset 0 2px 2px rgba(0,0,0,0.06);border-radius:3px"></div>
<div style="position:absolute;left:3358px;top:1192px;width:2px;height:60px;background:#c9c9c9;"></div>
<svg style="position:absolute;left:3380px;top:1207px;width:28px;height:30px" viewBox="0 0 28 30"><rect x="0" y="3" width="28" height="6" fill="#8b9bb4"/><rect x="5" y="0" width="3" height="5" fill="#8b9bb4"/><rect x="20" y="0" width="3" height="5" fill="#8b9bb4"/><rect x="0.5" y="11.0" width="4.4" height="3.8" fill="#8b9bb4"/><rect x="6.1" y="11.0" width="4.4" height="3.8" fill="#8b9bb4"/><rect x="11.7" y="11.0" width="4.4" height="3.8" fill="#8b9bb4"/><rect x="17.3" y="11.0" width="4.4" height="3.8" fill="#8b9bb4"/><rect x="22.9" y="11.0" width="4.4" height="3.8" fill="#8b9bb4"/><rect x="0.5" y="16.0" width="4.4" height="3.8" fill="#8b9bb4"/><rect x="6.1" y="16.0" width="4.4" height="3.8" fill="#8b9bb4"/><rect x="11.7" y="16.0" width="4.4" height="3.8" fill="#8b9bb4"/><rect x="17.3" y="16.0" width="4.4" height="3.8" fill="#8b9bb4"/><rect x="22.9" y="16.0" width="4.4" height="3.8" fill="#8b9bb4"/><rect x="0.5" y="21.0" width="4.4" height="3.8" fill="#8b9bb4"/><rect x="6.1" y="21.0" width="4.4" height="3.8" fill="#8b9bb4"/><rect x="11.7" y="21.0" width="4.4" height="3.8" fill="#8b9bb4"/><rect x="17.3" y="21.0" width="4.4" height="3.8" fill="#8b9bb4"/><rect x="22.9" y="21.0" width="4.4" height="3.8" fill="#8b9bb4"/><rect x="0.5" y="26.0" width="4.4" height="3.8" fill="#8b9bb4"/><rect x="6.1" y="26.0" width="4.4" height="3.8" fill="#8b9bb4"/><rect x="11.7" y="26.0" width="4.4" height="3.8" fill="#8b9bb4"/><rect x="17.3" y="26.0" width="4.4" height="3.8" fill="#8b9bb4"/><rect x="22.9" y="26.0" width="4.4" height="3.8" fill="#8b9bb4"/></svg>
<div style="position:absolute;left:2792.00px;top:1209.20px;font-size:28.5px;line-height:28.5px;color:#a5b1c8;font-weight:400;letter-spacing:1.248px;white-space:nowrap;">dd/mm/yyyy</div>
<div style="position:absolute;left:625.12px;top:1302.86px;font-size:32.5px;line-height:32.5px;color:#1f2933;font-weight:400;letter-spacing:-0.500px;white-space:nowrap;transform:scaleX(0.9386);transform-origin:0 0;">EDUCATION &amp; WORK EXPERIENCE</div>
<div style="position:absolute;left:590px;top:1346px;width:2879px;height:4px;background:#b3bfd4;"></div>
<svg style="position:absolute;left:568px;top:1336px;width:27px;height:27px" viewBox="0 0 27 27"><circle cx="13.5" cy="13.5" r="13.5" fill="#b3bfd4"/><rect x="6" y="10.8" width="15" height="5.4" rx="1" fill="#fff"/></svg>
<div style="position:absolute;left:609.04px;top:1392.20px;font-size:28.5px;line-height:28.5px;color:#222a31;font-weight:400;letter-spacing:-0.500px;white-space:nowrap;transform:scaleX(0.9824);transform-origin:0 0;">Educational Degree Required:</div>
<div style="position:absolute;left:606px;top:1427px;width:1383px;height:64px;background:#fff;border:2px solid #c9c9c9;border-radius:4px;box-sizing:border-box;box-shadow:inset 0 2px 2px rgba(0,0,0,0.06);border-radius:2px;box-shadow:none"></div>
<div style="position:absolute;left:629.00px;top:1447.20px;font-size:28.5px;line-height:28.5px;color:#222a31;font-weight:400;letter-spacing:1.239px;white-space:nowrap;">None</div>
<svg style="position:absolute;left:1961px;top:1454px;width:18px;height:11px" viewBox="0 0 18 11"><path d="M1.2 1.2 L9 9 L16.8 1.2" stroke="#222a31" stroke-width="2.6" fill="none"/></svg>
<div style="position:absolute;left:610.02px;top:1513.20px;font-size:28.5px;line-height:28.5px;color:#222a31;font-weight:400;letter-spacing:-0.500px;white-space:nowrap;transform:scaleX(0.9782);transform-origin:0 0;">Competencies and level</div>
<div style="position:absolute;left:606px;top:1549px;width:1383px;height:64px;background:#fff;border:2px solid #c9c9c9;border-radius:4px;box-sizing:border-box;box-shadow:inset 0 2px 2px rgba(0,0,0,0.06);border-radius:2px;box-shadow:none"></div>
<div style="position:absolute;left:629.00px;top:1570.20px;font-size:28.5px;line-height:28.5px;color:#222a31;font-weight:400;letter-spacing:-0.216px;white-space:nowrap;">Please select</div>
<svg style="position:absolute;left:1961px;top:1576px;width:18px;height:11px" viewBox="0 0 18 11"><path d="M1.2 1.2 L9 9 L16.8 1.2" stroke="#222a31" stroke-width="2.6" fill="none"/></svg>
<div style="position:absolute;left:2052.00px;top:1514.20px;font-size:28.5px;line-height:28.5px;color:#222a31;font-weight:400;letter-spacing:-0.500px;white-space:nowrap;transform:scaleX(0.9520);transform-origin:0 0;">Junior</div>
<div style="position:absolute;left:2532.00px;top:1514.20px;font-size:28.5px;line-height:28.5px;color:#222a31;font-weight:400;letter-spacing:0.475px;white-space:nowrap;">Medium</div>
<div style="position:absolute;left:3014.03px;top:1514.20px;font-size:28.5px;line-height:28.5px;color:#222a31;font-weight:400;letter-spacing:-0.500px;white-space:nowrap;transform:scaleX(0.9699);transform-origin:0 0;">Senior</div>
<div style="position:absolute;left:2049px;top:1567px;width:34px;height:34px;background:#fff;border:2px solid #c9c9c9;border-radius:5px;box-sizing:border-box"></div>
<div style="position:absolute;left:2530px;top:1567px;width:34px;height:34px;background:#fff;border:2px solid #c9c9c9;border-radius:5px;box-sizing:border-box"></div>
<div style="position:absolute;left:3011px;top:1567px;width:34px;height:34px;background:#fff;border:2px solid #c9c9c9;border-radius:5px;box-sizing:border-box"></div>
<div style="position:absolute;left:606px;top:1659px;width:227px;height:64px;background:#1a6cb0;border-radius:3px"></div>
<div style="position:absolute;left:631.00px;top:1678.20px;font-size:28.5px;line-height:28.5px;color:#ffffff;font-weight:400;letter-spacing:0.643px;white-space:nowrap;">Add new item</div>
<div style="position:absolute;left:625.15px;top:1792.86px;font-size:32.5px;line-height:32.5px;color:#1f2933;font-weight:400;letter-spacing:-0.500px;white-space:nowrap;transform:scaleX(0.9270);transform-origin:0 0;">LICENSES &amp; CERTIFICATIONS REQUIRED</div>
</body></html>
